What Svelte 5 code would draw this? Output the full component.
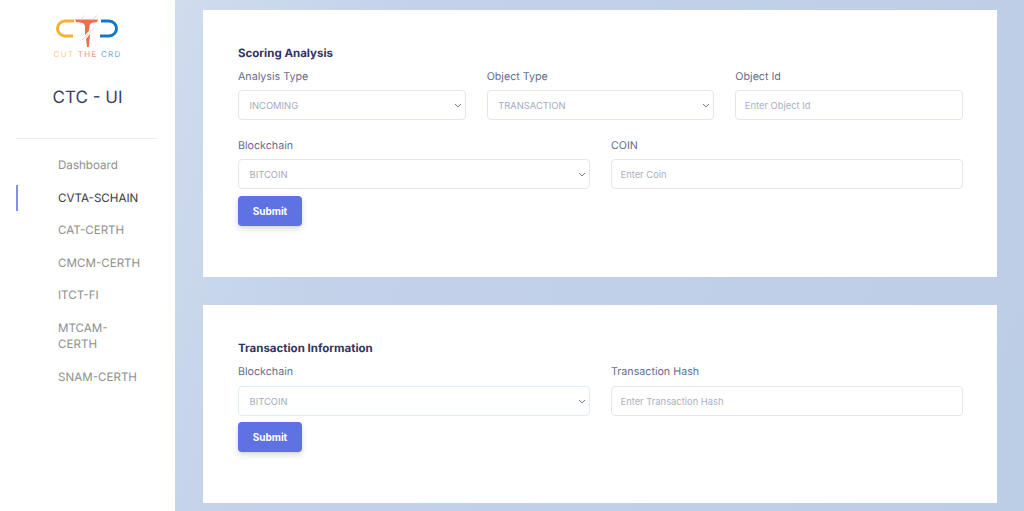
<script>
  const navItems = ['Dashboard', 'CVTA-SCHAIN', 'CAT-CERTH', 'CMCM-CERTH', 'ITCT-FI', 'MTCAM-CERTH', 'SNAM-CERTH'];
  const activeItem = 'CVTA-SCHAIN';
</script>

<div class="layout">
  <aside class="sidebar">
    <div class="brand">
      <svg class="logo" viewBox="0 0 64 32" width="64" height="32" aria-hidden="true">
        <path d="M19 6 H10 A7.500 7.500 0 0 0 10 21 H18" fill="none" stroke="#fbb034" stroke-width="3" />
        <path d="M46 6 H54 A7.500 7.500 0 0 1 54 21 H45" fill="none" stroke="#1478c8" stroke-width="3" />
        <path d="M20 4.500 H43 L42 7 C37 7.500 35 8 34.500 11 L34 16 L30 20 L30 11 C29.500 8 27 7.500 21 7 Z" fill="#f26b50" />
        <path d="M31 24 L35 19 L33.800 32 L32 32 Z" fill="#f26b50" />
        <path d="M25 5 L30 0.500 M36 5 L42 0.500 M27 25 L39 13" stroke="#f9c9bd" stroke-width="0.8" />
      </svg>
      <div class="logo-text"><span class="c1">CUT</span> <span class="c2">THE</span> <span class="c3">CRD</span></div>
      <div class="app-name">CTC - UI</div>
    </div>
    <hr class="divider" />
    <nav class="nav">
      {#each navItems as item}
        <a href="#top" class="nav-link" class:active={item === activeItem}>{item}</a>
      {/each}
    </nav>
  </aside>

  <main class="content">
    <section class="card first">
      <h3>Scoring Analysis</h3>
      <div class="row three">
        <div class="field">
          <label for="analysis">Analysis Type</label>
          <select id="analysis"><option>INCOMING</option><option>OUTGOING</option></select>
        </div>
        <div class="field">
          <label for="object">Object Type</label>
          <select id="object"><option>TRANSACTION</option><option>ADDRESS</option></select>
        </div>
        <div class="field">
          <label for="objectId">Object Id</label>
          <input id="objectId" placeholder="Enter Object Id" />
        </div>
      </div>
      <div class="row two">
        <div class="field">
          <label for="chain">Blockchain</label>
          <select id="chain"><option>BITCOIN</option><option>ETHEREUM</option></select>
        </div>
        <div class="field">
          <label for="coin">COIN</label>
          <input id="coin" placeholder="Enter Coin" />
        </div>
      </div>
      <button class="submit">Submit</button>
    </section>

    <section class="card second">
      <h3>Transaction Information</h3>
      <div class="row two">
        <div class="field">
          <label for="chain2">Blockchain</label>
          <select id="chain2" class="focused"><option>BITCOIN</option><option>ETHEREUM</option></select>
        </div>
        <div class="field">
          <label for="hash">Transaction Hash</label>
          <input id="hash" placeholder="Enter Transaction Hash" />
        </div>
      </div>
      <button class="submit">Submit</button>
    </section>
  </main>
</div>

<style>
  :global(body) {
    margin: 0;
    font-family: Inter, "Liberation Sans", sans-serif;
    text-rendering: geometricPrecision;
  }
  .layout {
    display: flex;
    height: 511px;
    overflow: hidden;
    background: linear-gradient(110deg, #d8e3f2 0%, #c3d2e9 35%, #bccde6 100%);
  }
  .sidebar {
    width: 175px;
    flex: none;
    background: #fff;
    box-sizing: border-box;
    padding-top: 15px;
  }
  .brand {
    display: flex;
    flex-direction: column;
    align-items: center;
  }
  .logo {
    display: block;
    margin-right: 1px;
  }
  .logo-text {
    margin-top: 2px;
    font-size: 8px;
    line-height: 10px;
    letter-spacing: 1.250px;
    white-space: nowrap;
  }
  .c1 { color: #fbcb8c; }
  .c2 { color: #f5917c; }
  .c3 { color: #6fa9d8; }
  .app-name {
    margin-top: 27px;
    font-size: 17px;
    line-height: 24px;
    color: #3c3f66;
  }
  .divider {
    margin: 28px 18px 0 16px;
    border: 0;
    border-top: 1px solid #ececf0;
  }
  .nav {
    display: flex;
    flex-direction: column;
    padding-top: 10px;
  }
  .nav-link {
    position: relative;
    display: block;
    padding: 8px 32px 8px 58px;
    font-size: 11.600px;
    line-height: 16.500px;
    color: #8f8f8f;
    text-decoration: none;
  }
  .nav-link.active {
    color: #3a3a3f;
  }
  .nav-link.active::before {
    content: '';
    position: absolute;
    left: 16px;
    top: 3px;
    bottom: 3px;
    width: 1.500px;
    background: #8390e6;
  }
  .content {
    flex: 1;
    min-width: 0;
    box-sizing: border-box;
    padding: 10px 27px 0 28px;
    display: flex;
    flex-direction: column;
    gap: 28px;
  }
  .card {
    background: #fff;
    padding: 0 34px 0 35px;
    box-sizing: border-box;
  }
  .card.first {
    height: 267px;
    padding-top: 36px;
  }
  .card.second {
    height: 198px;
    padding-top: 36px;
  }
  h3 {
    margin: 0 0 10px;
    font-size: 11.500px;
    line-height: 14px;
    font-weight: 700;
    color: #32345f;
  }
  .row {
    display: grid;
    column-gap: 21px;
    margin-bottom: 7px;
  }
  .three { grid-template-columns: repeat(3, 1fr); }
  .two { grid-template-columns: repeat(2, 1fr); }
  .first .row + .row { margin-top: 19px; }
  .second .row { margin-bottom: 6px; }
  .field {
    display: flex;
    flex-direction: column;
    min-width: 0;
  }
  label {
    font-size: 10.700px;
    line-height: 14px;
    color: #666d8f;
    margin-bottom: 6px;
  }
  .second label { margin-bottom: 7px; }
  select, input {
    box-sizing: border-box;
    width: 100%;
    height: 30px;
    border: 1px solid #e3e6ec;
    border-radius: 4px;
    background-color: #fff;
    padding: 0 10.500px;
    font-family: inherit;
    font-size: 9.400px;
    color: #a3abbb;
    outline: none;
  }
  input {
    padding: 0 8.500px;
  }
  select {
    appearance: none;
    background-image: url("data:image/svg+xml,%3Csvg xmlns='http://www.w3.org/2000/svg' viewBox='0 0 8 5'%3E%3Cpath d='M1 1l3 3 3-3' fill='none' stroke='%23737c96' stroke-width='1'/%3E%3C/svg%3E");
    background-repeat: no-repeat;
    background-position: right 3px center;
    background-size: 8px 5px;
  }
  select.focused {
    border-color: #dfedfa;
  }
  input::placeholder {
    color: #aab1bf;
    opacity: 1;
  }
  .submit {
    display: block;
    width: 64px;
    height: 30px;
    border: 0;
    border-radius: 4px;
    background: #5e72e4;
    color: #fff;
    font-family: inherit;
    font-size: 10px;
    font-weight: 700;
    box-shadow: 0 3px 6px rgba(50, 50, 93, 0.16), 0 1px 2px rgba(0, 0, 0, 0.08);
  }
</style>
